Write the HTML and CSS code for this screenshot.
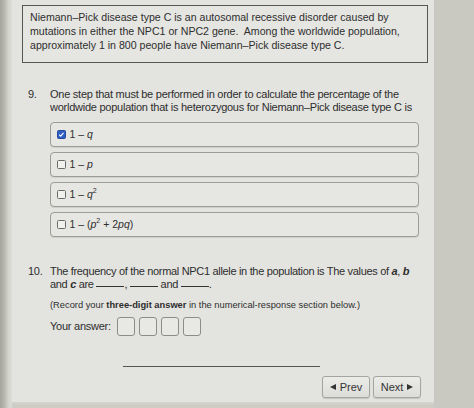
FILE: index.html
```html
<!DOCTYPE html>
<html>
<head>
<meta charset="utf-8">
<link rel="stylesheet" href="styles.css">
</head>
<body>
<div class="screen">
  <div class="strip"></div>
  <div class="page">
    <div class="intro">Niemann–Pick disease type C is an autosomal recessive disorder caused by<br>mutations in either the NPC1 or NPC2 gene.&nbsp; Among the worldwide population,<br>approximately 1 in 800 people have Niemann–Pick disease type C.</div>

    <div class="question q9">
      <div class="num">9.</div>
      <div class="qbody">
        <div class="qtext">One step that must be performed in order to calculate the percentage of the<br>worldwide population that is heterozygous for Niemann–Pick disease type C is</div>
        <div class="options">
          <div class="option"><span class="cb checked"><svg viewBox="0 0 10 10" width="7" height="7"><path d="M1.8 5.2 L4.2 7.6 L8.4 2.4" fill="none" stroke="#fff" stroke-width="1.7"/></svg></span><span class="math">1 – <i>q</i></span></div>
          <div class="option"><span class="cb"></span><span class="math">1 – <i>p</i></span></div>
          <div class="option"><span class="cb"></span><span class="math">1 – <i>q</i><sup>2</sup></span></div>
          <div class="option"><span class="cb"></span><span class="math">1 – (<i>p</i><sup>2</sup> + 2<i>pq</i>)</span></div>
        </div>
      </div>
    </div>

    <div class="question q10">
      <div class="num">10.</div>
      <div class="qbody">
        <div class="qtext tight">The frequency of the normal NPC1 allele in the population is The values of <b><i>a</i></b>, <b><i>b</i></b><br>and <b><i>c</i></b> are <span class="blank"></span>, <span class="blank"></span> and <span class="blank"></span>.</div>
        <div class="record">(Record your <b>three-digit answer</b> in the numerical-response section below.)</div>
        <div class="answer">
          <span class="alabel">Your answer:</span>
          <span class="boxes"><span class="box"></span><span class="box"></span><span class="box"></span><span class="box"></span></span>
        </div>
      </div>
    </div>

    <div class="rule"></div>
    <div class="nav">
      <button class="btn"><span class="tri left"></span>Prev</button>
      <button class="btn">Next<span class="tri right"></span></button>
    </div>
  </div>
  <div class="side"></div>
</div>
</body>
</html>
```

FILE: styles.css
```css
html, body {
  margin: 0;
  padding: 0;
}
body {
  width: 474px;
  height: 408px;
  overflow: hidden;
  background: #c9c9c1;
  font-family: "Liberation Sans", Arial, sans-serif;
  color: #2e2e2e;
}
.screen {
  display: flex;
  height: 408px;
  background: #cdcdc6;
}
.strip {
  width: 12px;
  height: 408px;
  background: linear-gradient(to right, #a4a49d, #b9b9b1 40%, #d4d4ce 70%, #dcdcd7);
  flex: none;
}
.page {
  width: 422px;
  flex: none;
  height: 404px;
  background: #e3e3df;
  border-bottom: 2px solid #d3d3cd;
  box-sizing: border-box;
  padding-top: 5px;
  display: flex;
  flex-direction: column;
  white-space: nowrap;
}
.side {
  flex: 1;
  background: #c9c9c1;
}
.intro {
  margin-left: 10px;
  width: 406px;
  height: 58px;
  box-sizing: border-box;
  border: 1.5px solid #555;
  padding: 4px 7px 0 7px;
  font-size: 10.6px;
  line-height: 14px;
  background: #e5e5e1;
}
.question {
  display: flex;
  font-size: 11px;
  letter-spacing: -0.25px;
  line-height: 13px;
}
.qtext.tight { letter-spacing: -0.32px; }
.q9 { margin-top: 25px; }
.q10 { margin-top: 28px; }
.num {
  width: 38px;
  box-sizing: border-box;
  padding-left: 16px;
  flex: none;
}
.qbody { flex: 1; }
.options {
  margin-top: 8px;
  display: flex;
  flex-direction: column;
  gap: 5px;
  width: 369px;
  letter-spacing: 0;
}
.option {
  height: 25px;
  box-sizing: border-box;
  border: 1px solid #9c9c98;
  border-radius: 4px;
  background: #e6e6e2;
  display: flex;
  align-items: center;
  padding-left: 6px;
  gap: 4px;
  box-shadow: 0 1px 0 #d0d0ca;
}
.cb {
  width: 8.5px;
  height: 8.5px;
  box-sizing: border-box;
  border: 1px solid #6a6a6a;
  border-radius: 1.5px;
  background: #f0f0ec;
  display: inline-flex;
  align-items: center;
  justify-content: center;
}
.cb.checked {
  background: #2f5fc4;
  border-color: #26489a;
}
.math {
  font-size: 10.5px;
}
.math sup {
  font-size: 7px;
  line-height: 0;
  vertical-align: 5px;
}
.blank {
  display: inline-block;
  width: 28px;
  border-bottom: 1px solid #333;
  vertical-align: 1px;
}
.record {
  margin-top: 8px;
  font-size: 9.3px;
  line-height: 12px;
  letter-spacing: 0;
}
.answer {
  margin-top: 6px;
  display: flex;
  align-items: center;
}
.alabel {
  width: 67px;
  flex: none;
}
.boxes {
  display: flex;
  gap: 4px;
}
.box {
  width: 18px;
  height: 19px;
  box-sizing: border-box;
  border: 1px solid #8c8c88;
  border-radius: 3px;
  background: #e8e8e4;
}
.rule {
  margin-top: 30px;
  margin-left: 111px;
  width: 197px;
  height: 1px;
  background: #555;
}
.nav {
  margin-top: 9px;
  display: flex;
  gap: 3px;
  padding-left: 310px;
}
.btn {
  width: 48px;
  height: 22px;
  box-sizing: border-box;
  border: 1px solid #a4a4a0;
  border-radius: 3px;
  background: linear-gradient(#ebebe8, #dcdcd8);
  font-family: "Liberation Sans", Arial, sans-serif;
  font-size: 11px;
  color: #333;
  display: flex;
  align-items: center;
  justify-content: center;
  gap: 4px;
  padding: 0;
  box-shadow: 0 1px 1px #c4c4be;
}
.tri {
  width: 0;
  height: 0;
  border-top: 3.5px solid transparent;
  border-bottom: 3.5px solid transparent;
}
.tri.left { border-right: 6px solid #333; }
.tri.right { border-left: 6px solid #333; }
```
